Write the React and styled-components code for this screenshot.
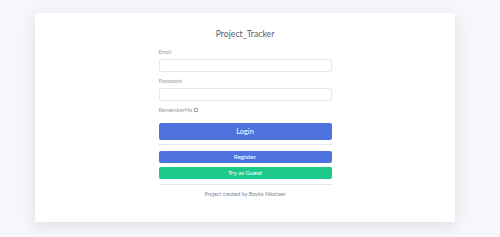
import React from 'react';
import styled, { createGlobalStyle } from 'styled-components';

const GlobalStyle = createGlobalStyle`
  html, body {
    margin: 0;
    padding: 0;
    background: #f6f7fb;
    font-family: "Lato", "Noto Sans", sans-serif;
  }
`;

const Page = styled.div`
  width: 500px;
  height: 237px;
  padding-top: 13px;
  box-sizing: border-box;
`;

const Card = styled.div`
  margin-left: 35px;
  width: 420px;
  height: 209px;
  background: #fff;
  box-shadow: 0 4px 14px rgba(58, 59, 69, 0.13);
  display: flex;
  justify-content: center;
`;

const Form = styled.form`
  width: 173px;
  display: flex;
  flex-direction: column;
  padding-top: 14px;
`;

const Title = styled.h1`
  margin: 0 0 7px;
  font-size: 8.7px;
  font-weight: 400;
  line-height: 14px;
  color: #5a5c69;
  text-align: center;
`;

const Label = styled.label`
  font-size: 5.5px;
  line-height: 8px;
  height: 8px;
  color: #9a9ba6;
  margin-bottom: 3px;
  display: flex;
  align-items: center;
  gap: 1.5px;
`;

const Input = styled.input`
  box-sizing: border-box;
  height: 13px;
  width: 100%;
  border: 1px solid #e6e8f0;
  border-radius: 2px;
  margin: 0 0 ${p => p.gap}px;
  padding: 0 4px;
  font-size: 6px;
`;

const Box = styled.span`
  box-sizing: border-box;
  width: 4.5px;
  height: 4.5px;
  border: 0.6px solid #a0a1ab;
  border-radius: 0.8px;
  background: #fff;
  display: inline-block;
`;

const Button = styled.button`
  box-sizing: border-box;
  width: 100%;
  height: ${p => p.h}px;
  border: none;
  border-radius: 2px;
  background: ${p => p.bg};
  color: #fff;
  font-family: inherit;
  font-size: ${p => p.fs}px;
  line-height: ${p => p.h}px;
  padding: 0;
  margin-top: ${p => p.mt || 0}px;
  margin-bottom: ${p => p.mb || 0}px;
  cursor: pointer;
  flex-shrink: 0;
`;

const Divider = styled.hr`
  width: 100%;
  border: none;
  border-top: 1px solid #e6e8f0;
  margin: ${p => p.m};
`;

const Footer = styled.p`
  margin: 0;
  font-size: 5.4px;
  line-height: 8px;
  color: #858796;
  text-align: center;
`;

export default function App() {
  return (
    <>
      <GlobalStyle />
      <Page>
        <Card>
          <Form onSubmit={e => e.preventDefault()}>
            <Title>Project_Tracker</Title>
            <Label>Email</Label>
            <Input type="email" gap={5} />
            <Label>Password</Label>
            <Input type="password" gap={5} />
            <Label>RememberMe <Box /></Label>
            <Button h={17} bg="#4e73df" fs={7.5} mt={6}>Login</Button>
            <Divider m="4px 0 6px" />
            <Button h={12} bg="#4e73df" fs={6.3} mb={4}>Register</Button>
            <Button h={12} bg="#1cc88a" fs={6.3}>Try as Guest</Button>
            <Divider m="5px 0 5px" />
            <Footer>Project created by Boyko Nikolaev</Footer>
          </Form>
        </Card>
      </Page>
    </>
  );
}
